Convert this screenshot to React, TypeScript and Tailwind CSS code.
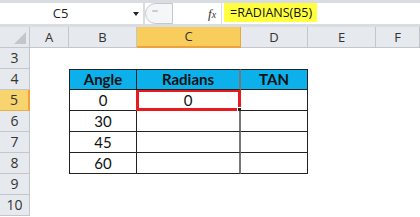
import React from "react";

const COLS = ["A", "B", "C", "D", "E", "F"];
const ROWS = [3, 4, 5, 6, 7, 8, 9, 10];

// table body lives in B..D, rows 4..8
const TABLE: Record<number, string[]> = {
    4: ["Angle", "Radians", "TAN"],
    5: ["0", "0", ""],
    6: ["30", "", ""],
    7: ["45", "", ""],
    8: ["60", "", ""],
};

const GRID = "grid grid-cols-[30px_39px_68px_104px_67px_68px_1fr] grid-rows-[21px] h-[21px] overflow-hidden";

function FormulaBar() {
    return (
        <div className="h-[27px] bg-[#d9dce0] pt-[3px] pb-[3px]">
            <div className="h-[21px] flex items-center bg-white">
                <div className="w-[143px] h-full flex items-center relative">
                    <span className="flex-1 text-center text-[13px] text-[#222] pr-[22px] leading-none">C5</span>
                    <span className="absolute left-[133px] top-[9px] w-0 h-0 border-l-[3px] border-r-[3px] border-t-[4px] border-l-transparent border-r-transparent border-t-[#222]" />
                </div>
                <div className="w-[2px] h-full bg-[#d9dce0]" />
                <div className="h-[21px] w-[28px] rounded-l-full border border-[#c4c8cd] bg-[#f5f6f7] flex items-center pl-[6px]">
                    <span className="w-[6px] h-[2px] rounded bg-[#c8ccd1] -mt-[6px]" />
                </div>
                <div className="flex-1 h-full flex items-center">
                    <span className="ml-[35px] text-[13px] italic text-[#333] leading-none" style={{ fontFamily: "'Liberation Serif', serif" }}>
                        f<span className="text-[10px]">x</span>
                    </span>
                    <div className="ml-[5px] w-[1px] h-full bg-[#d9dce0]" />
                    <span className="ml-[2px] h-[19px] self-start bg-[#ffff3f] pl-[6px] pr-[5px] text-[12.5px] text-[#111] leading-[19px]">=RADIANS(B5)</span>
                </div>
            </div>
        </div>
    );
}

function ColumnHeaders() {
    return (
        <div className={`${GRID} text-[13px] text-[#333]`}>
            <div className="bg-[#e6e9ed] border-r border-b border-[#c3c7cc] relative">
                <svg className="absolute right-[3px] bottom-[3px]" width="12" height="12" viewBox="0 0 12 12">
                    <polygon points="12,0 12,12 0,12" fill="#c3c7cc" />
                </svg>
            </div>
            {COLS.map((c) =>
                c === "C" ? (
                    <div key={c} className="bg-[#f8cd5c] border-r border-b-2 border-r-[#e6a83a] border-b-[#f0a23a] flex items-center justify-center leading-none">
                        {c}
                    </div>
                ) : (
                    <div key={c} className="bg-[#e6e9ed] border-r border-b border-[#c3c7cc] flex items-center justify-center leading-none">
                        {c}
                    </div>
                )
            )}
        </div>
    );
}

function Cell({ row, col }: { row: number; col: number }) {
    const data = TABLE[row];
    if (!data || col < 1 || col > 3) return <div />;
    const text = data[col - 1];
    const head = row === 4;
    const selected = row === 5 && col === 2;
    return (
        <div
            className={[
                "relative flex items-center justify-center text-[15px] leading-none text-[#111] border-b border-b-[#222]",
                col === 1 ? "border-l border-l-[#222]" : "",
                col === 2 ? "border-r-[2px] border-r-[#777]" : "border-r border-r-[#222]",
                head ? "bg-[#0cb0ea] font-bold border-t border-t-[#222]" : "bg-white",
            ].join(" ")}
        >
            {selected && (
                <div className="absolute -left-[1px] -top-[1px] -right-[2px] -bottom-[1px] border-[3px] border-[#e8191f]">
                    <span className="absolute -right-[4px] -bottom-[4px] w-[5px] h-[5px] bg-[#222] border border-white" />
                </div>
            )}
            <span className="relative">{text}</span>
        </div>
    );
}

export default function App() {
    return (
        <div className="w-[420px] h-[217px] overflow-hidden bg-white" style={{ fontFamily: "'Open Sans', 'Noto Sans', sans-serif" }}>
            <FormulaBar />
            <ColumnHeaders />
            {ROWS.map((r) => (
                <div key={r} className={GRID} style={{ fontFamily: "Lato, 'Open Sans', sans-serif" }}>
                    {r === 5 ? (
                        <div className="bg-[#f8d46e] border-r-2 border-b border-r-[#f0a23a] border-b-[#e6b04a] flex items-center justify-center text-[14px] leading-none text-[#333]" style={{ fontFamily: "'Open Sans', sans-serif" }}>
                            {r}
                        </div>
                    ) : (
                        <div className="bg-[#e6e9ed] border-r border-b border-[#c3c7cc] flex items-center justify-center text-[14px] leading-none text-[#333]" style={{ fontFamily: "'Open Sans', sans-serif" }}>
                            {r}
                        </div>
                    )}
                    <div />
                    <Cell row={r} col={1} />
                    <Cell row={r} col={2} />
                    <Cell row={r} col={3} />
                    <div />
                    <div />
                </div>
            ))}
        </div>
    );
}
